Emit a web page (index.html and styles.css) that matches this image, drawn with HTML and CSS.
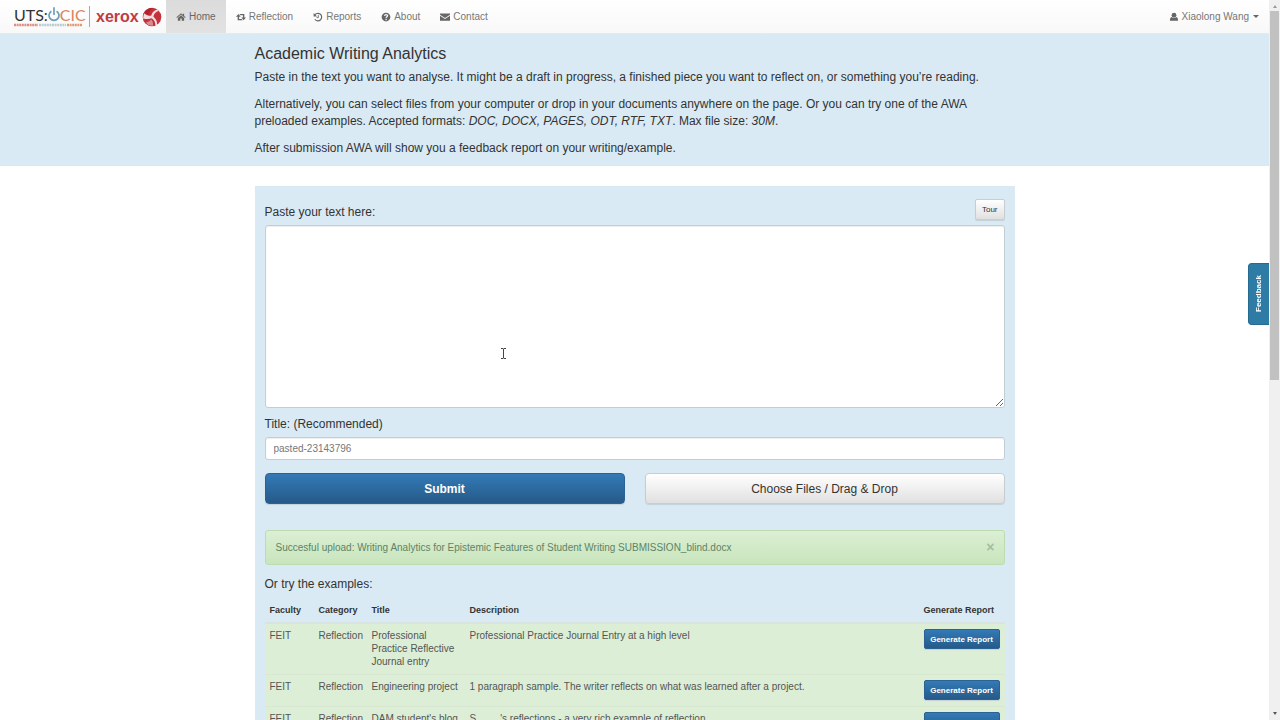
FILE: index.html
```html
<!DOCTYPE html>
<html lang="en">
<head>
<meta charset="utf-8">
<meta name="viewport" content="width=device-width, initial-scale=1">
<title>Academic Writing Analytics</title>
<link rel="stylesheet" href="styles.css">
</head>
<body>
<header class="navbar">
  <a class="brand" href="#" aria-label="UTS CIC and Xerox">
    <span class="uts">
      <span class="uts-name"><span>UTS:</span><svg class="power" viewBox="0 0 14 18" aria-hidden="true"><path d="M4 4.500a5.800 5.800 0 1 0 6 0" fill="none" stroke="#6f9fb8" stroke-width="2"/><path d="M7 0v9" stroke="#6f9fb8" stroke-width="2"/></svg><span class="cic">CIC</span></span>
      <svg class="uts-rule" viewBox="0 0 68 4" aria-hidden="true"><path d="M0 2h24" stroke="#dc8f80" stroke-width="2.600" stroke-dasharray="2 .6"/><path d="M25 2h27" stroke="#b9cdd0" stroke-width="2.600" stroke-dasharray="2 .6"/><path d="M53 2h15" stroke="#dc9b78" stroke-width="2.600" stroke-dasharray="2 .6"/></svg>
    </span>
    <span class="divider"></span>
    <span class="xerox">xerox</span>
    <svg class="ball" viewBox="0 0 20 20" aria-hidden="true"><circle cx="10" cy="10" r="9.300" fill="#c4313d"/><path d="M1.500 6.500C4 1.500 8 .5 11.500 1 7.500 3 6.500 6 8 9.500 5.500 9 3 8 1.500 6.500z" fill="#b3222f"/><path d="M2 6.200c3 2.500 5.500 2.800 7.200 2.600C10 5 12.500 2.800 15.500 2.400l1.300 1.400c-3 .9-4.800 3-5.400 5.600 2.600 2.500 4 5 3.700 8.400l-1.800.900c.3-3.200-1-5.500-3.600-7.500-2 .9-4.500 1.200-8.700.2z" fill="#f2dcdd"/><path d="M4 15.500c2-.4 4-1.500 5.300-3 1.500 1.700 2 3.500 1.700 6.300-3 .2-5.500-1-7-3.300z" fill="#d98b91"/></svg>
  </a>
  <nav class="menu" aria-label="Main">
    <a class="item active" href="#"><svg viewBox="0 0 16 16" aria-hidden="true"><path d="M8 2 .6 8.300l1 1.100L8 4l6.400 5.400 1-1.100L13 6.200V2.800h-2v1.700z"/><path d="M8 5.200 3 9.400V14h3.800v-3.700h2.400V14H13V9.400z"/></svg>Home</a>
    <a class="item" href="#"><svg viewBox="0 0 18 16" aria-hidden="true"><path d="M4.200 2.500 0 7.500h3V14h9l-2-2.500H5.500v-4h3zM13.800 14 18 9h-3V2.500H6l2 2.500h4.500v4h-3z"/></svg>Reflection</a>
    <a class="item" href="#"><svg viewBox="0 0 16 16" aria-hidden="true"><path d="M2.500 5.500A6 6 0 1 1 3 11.600" fill="none" stroke="currentColor" stroke-width="1.800"/><path d="M1 1.500v5.500h5.500z"/><path d="M8.500 5v4H5.800" fill="none" stroke="currentColor" stroke-width="1.400"/></svg>Reports</a>
    <a class="item" href="#"><svg viewBox="0 0 16 16" aria-hidden="true"><circle cx="8" cy="8" r="7"/><path d="M5.600 6.200C5.800 4.500 7 4 8.100 4c1.400 0 2.500.8 2.500 2.100C10.600 7.800 8.200 7.700 8.200 9.600M8.200 10.800V13" fill="none" stroke="#fafafa" stroke-width="2"/></svg>About</a>
    <a class="item" href="#"><svg viewBox="0 0 16 16" aria-hidden="true"><path d="M0 2.500h16v1.700L8 9.700 0 4.200z"/><path d="M0 5.800l8 5.500 8-5.500V14H0z"/></svg>Contact</a>
  </nav>
  <button class="item user" type="button"><svg viewBox="0 0 16 16" aria-hidden="true"><circle cx="8" cy="5" r="3.800"/><path d="M4.500 8C2 8.500 1.500 11 1.500 14h13c0-3-.5-5.500-3-6-2 1.800-5 1.800-7 0z"/></svg>Xiaolong Wang<span class="caret"></span></button>
</header>

<section class="intro">
  <div class="container">
    <h1>Academic Writing Analytics</h1>
    <p>Paste in the text you want to analyse. It might be a draft in progress, a finished piece you want to reflect on, or something you’re reading.</p>
    <p>Alternatively, you can select files from your computer or drop in your documents anywhere on the page. Or you can try one of the AWA preloaded examples. Accepted formats: <em>DOC, DOCX, PAGES, ODT, RTF, TXT</em>. Max file size: <em>30M</em>.</p>
    <p>After submission AWA will show you a feedback report on your writing/example.</p>
  </div>
</section>

<main class="container panel">
  <form class="form">
    <div class="form-head">
      <label for="text">Paste your text here:</label>
      <button class="btn tour" type="button">Tour</button>
    </div>
    <div class="area">
      <textarea class="field" id="text"></textarea>
      <svg class="pointer" viewBox="0 0 7 13" aria-hidden="true"><path d="M1 1.500h2l.5.500.5-.5h2M3.500 2v9M1 11.500h2l.5-.5.5.5h2" fill="none" stroke="#444"/></svg>
    </div>
    <label class="title-label" for="title">Title: (Recommended)</label>
    <input class="field title" id="title" type="text" placeholder="pasted-23143796">
    <div class="actions">
      <button class="btn large primary" type="button">Submit</button>
      <button class="btn large" type="button">Choose Files / Drag &amp; Drop</button>
    </div>
  </form>
  <div class="alert" role="status">
    <span>Succesful upload: Writing Analytics for Epistemic Features of Student Writing SUBMISSION_blind.docx</span>
    <button class="close" type="button" aria-label="Close">×</button>
  </div>
  <h2>Or try the examples:</h2>
  <table class="examples">
    <colgroup><col class="c-faculty"><col class="c-category"><col class="c-title"><col><col class="c-report"></colgroup>
    <thead>
      <tr><th>Faculty</th><th>Category</th><th>Title</th><th>Description</th><th>Generate Report</th></tr>
    </thead>
    <tbody>
      <tr><td>FEIT</td><td>Reflection</td><td>Professional Practice Reflective Journal entry</td><td>Professional Practice Journal Entry at a high level</td><td><button class="btn primary small" type="button">Generate Report</button></td></tr>
      <tr><td>FEIT</td><td>Reflection</td><td>Engineering project</td><td>1 paragraph sample. The writer reflects on what was learned after a project.</td><td><button class="btn primary small" type="button">Generate Report</button></td></tr>
      <tr><td>FEIT</td><td>Reflection</td><td>DAM student's blog</td><td>S<span class="redacted"></span>'s reflections - a very rich example of reflection</td><td><button class="btn primary small" type="button">Generate Report</button></td></tr>
    </tbody>
  </table>
</main>

<button class="feedback" type="button">Feedback</button>
<div class="scrollbar" aria-hidden="true">
  <span class="arrow up"></span>
  <span class="thumb"></span>
  <span class="arrow down"></span>
</div>
</body>
</html>
```
FILE: styles.css
```css
* { box-sizing: border-box; }
html { scrollbar-width: none; }
body {
  margin: 0;
  padding-right: 11px;
  background: #fff;
  color: #333;
  font: 10px/13px "Liberation Sans", Arial, sans-serif;
}
button, input, textarea { font: inherit; color: inherit; margin: 0; }
button { cursor: pointer; }
a { color: inherit; text-decoration: none; }
.container { width: 760px; max-width: 100%; margin: 0 auto; }

/* Navigation */
.navbar {
  display: flex;
  height: 34px;
  background: linear-gradient(#fff, #f8f8f8);
  border-bottom: 1px solid #e4ebef;
  color: #777;
}
.brand { display: flex; align-items: center; padding: 0 4px 0 14px; }
.uts { display: flex; flex-direction: column; width: 69px; }
.uts-name { display: flex; align-items: center; height: 16px; font: 16px/16px Lato, sans-serif; color: #333; }
.power { width: 12px; height: 16px; flex: none; }
.cic { color: #d98560; }
.uts-rule { display: block; width: 68px; height: 4px; }
.divider { width: 1px; height: 21px; margin: 0 6px; background: #aaa; }
.xerox { font: bold 16px/20px "Liberation Sans", Arial, sans-serif; color: #c23a45; width: 44px; }
.ball { width: 20px; height: 20px; margin-left: 2px; }
.menu { display: flex; }
.item { display: flex; align-items: center; padding: 0 10px; }
.item svg { width: 10px; height: 10px; margin-right: 3px; fill: #666; color: #666; }
.item.active { background: linear-gradient(#dbdbdb, #e2e2e2); color: #666; }
.user { margin-left: auto; border: 0; background: none; }
.caret { margin-left: 4px; border: 3px solid transparent; border-top-color: #666; border-bottom: 0; }

/* Introduction */
.intro { background: #d9eaf4; padding: 10px 0 9px; font-size: 12px; line-height: 17px; }
h1 { margin: 0 0 5px; font-size: 16px; line-height: 20px; font-weight: normal; }
.intro p { margin: 0 0 10px; }
.intro p:last-child { margin: 0; }

/* Submission form */
.panel { margin-top: 20px; padding: 13px 10px 20px; background: #d9eaf4; }
.form-head { display: flex; justify-content: space-between; height: 26px; }
.form label { font-size: 12px; line-height: 17px; }
.form-head label { padding-top: 5px; }
.field {
  display: block;
  width: 100%;
  border: 1px solid #c3ced4;
  border-radius: 3px;
  background: #fff;
  padding: 4px 8px;
  box-shadow: inset 0 1px 1px #eee;
}
.area { position: relative; }
.area .field { height: 183px; }
.pointer { position: absolute; left: 235px; top: 122px; width: 7px; height: 13px; }
.form .title-label { display: block; padding: 8px 0 4px; }
.title { height: 23px; }
.title::placeholder { color: #777; opacity: 1; }
.actions { display: grid; grid-template-columns: 1fr 1fr; gap: 20px; margin-top: 13px; }
.btn {
  padding: 0 6px;
  border: 1px solid #c8cdd0;
  border-radius: 4px;
  background: linear-gradient(#fff, #e0e0e0);
  box-shadow: 0 1px 1px #c5d1d8;
}
.large { height: 31px; padding-top: 2px; font-size: 12px; }
.tour { height: 21px; font-size: 8px; border-radius: 2px; }
.primary {
  border-color: #2b6293;
  background: linear-gradient(#337ab7, #265a88);
  color: #fff;
}
.large.primary { font-weight: bold; }

/* Upload message */
.alert {
  display: flex;
  align-items: center;
  justify-content: space-between;
  height: 35px;
  margin: 26px 0 11px;
  padding: 0 9px 0 10px;
  border: 1px solid #bcdcb0;
  border-radius: 3px;
  background: linear-gradient(#dcefd4, #c8e5bc);
  color: #5f8365;
}
.close { padding: 0; border: 0; background: none; color: #a3bf9c; font-weight: bold; font-size: 14px; }

/* Examples */
h2 { margin: 0 0 6px; font-size: 12px; line-height: 17px; font-weight: normal; }
.examples { width: 100%; table-layout: fixed; border-collapse: collapse; }
.c-faculty { width: 49px; }
.c-category { width: 53px; }
.c-title { width: 98px; }
.c-report { width: 86px; }
.examples th { padding: 5px 0 5px 5px; border-bottom: 2px solid #d8e4e2; text-align: left; font-size: 9px; white-space: nowrap; }
.examples td { padding: 5px 5px 6px; background: #dceed6; border-bottom: 1px solid #d7e7d1; vertical-align: top; color: #555; }
.small { display: block; width: 76px; height: 20px; padding: 0; border-radius: 2px; font-size: 8px; font-weight: bold; }
.redacted { display: inline-block; width: 24px; }

/* Window furniture */
.feedback {
  position: fixed;
  right: 11px;
  top: 263px;
  width: 21px;
  height: 62px;
  padding: 0;
  border: 1px solid #256a91;
  border-left: 0;
  border-radius: 0 4px 4px 0;
  background: #2e7ba6;
  color: #fff;
  font-size: 8px;
  font-weight: bold;
  writing-mode: vertical-rl;
  transform: rotate(180deg);
}
.scrollbar {
  position: fixed;
  right: 0;
  top: 0;
  bottom: 0;
  width: 11px;
  display: flex;
  flex-direction: column;
  align-items: center;
  padding: 5px 0;
  background: #f0f0f0;
}
.thumb { width: 9px; height: 52%; margin-top: 3px; background: #c1c1c1; }
.arrow { border: 2px solid transparent; }
.up { border-bottom: 3px solid #999; border-top: 0; }
.down { margin-top: auto; border-top: 3px solid #555; border-bottom: 0; }
```
